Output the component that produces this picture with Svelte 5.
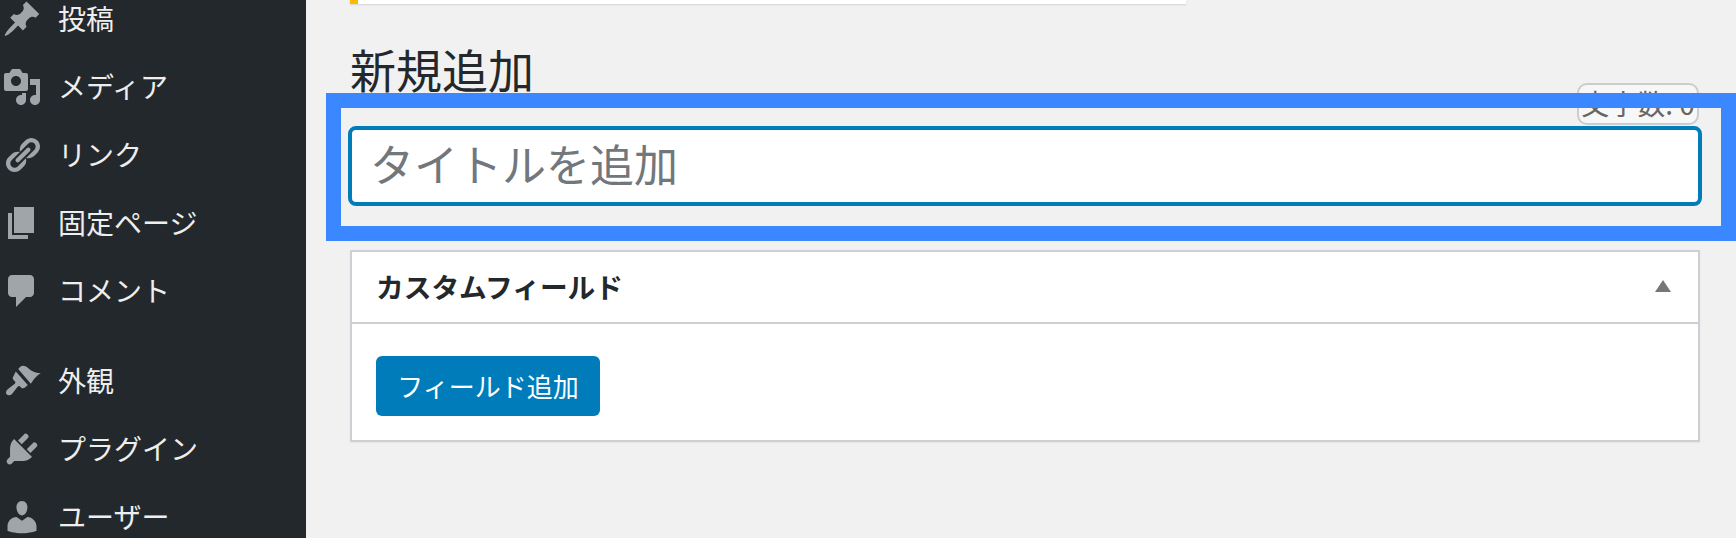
<script>
  const menu = [
    { label: '投稿', icon: 'M10.44 3.02l1.82-1.82 6.36 6.35-1.83 1.82c-1.05-.68-2.48-.57-3.41.36l-.75.75c-.92.93-1.04 2.35-.35 3.41l-1.83 1.82-2.41-2.41-2.8 2.79c-.42.42-3.38 2.71-3.8 2.29s1.86-3.39 2.28-3.81l2.79-2.79L4.1 9.36l1.83-1.82c1.05.69 2.48.57 3.4-.36l.75-.75c.93-.92 1.05-2.35.36-3.41z' },
    { label: 'メディア', icon: 'M13 11V4c0-.55-.45-1-1-1h-1.67L9 1H5L3.67 3H2c-.55 0-1 .45-1 1v7c0 .55.45 1 1 1h10c.55 0 1-.45 1-1zM7 4.5c1.38 0 2.5 1.12 2.5 2.5S8.38 9.5 7 9.5 4.5 8.38 4.5 7 5.62 4.5 7 4.5zM14 6h5v10.5c0 1.38-1.12 2.5-2.5 2.5S14 17.88 14 16.5s1.12-2.5 2.5-2.5c.17 0 .34.02.5.05V9h-3V6zm-4 8.05V13h2v3.5c0 1.38-1.12 2.5-2.5 2.5S7 17.88 7 16.5 8.12 14 9.5 14c.17 0 .34.02.5.05z' },
    { label: 'リンク', icon: 'M17.74 2.76c1.68 1.69 1.68 4.41 0 6.1l-1.53 1.52c-1.12 1.12-2.7 1.47-4.14 1.09l2.62-2.61.76-.77.76-.76c.84-.84.84-2.2 0-3.04-.84-.85-2.2-.85-3.04 0l-.77.76-3.38 3.38c-.37-1.44-.02-3.02 1.1-4.14l1.52-1.53c1.69-1.68 4.42-1.68 6.1 0zM8.59 13.43l5.34-5.34c.42-.42.42-1.1 0-1.52-.44-.43-1.13-.39-1.53 0l-5.33 5.34c-.42.42-.42 1.1 0 1.52.44.43 1.13.39 1.52 0zm-.76 2.29l4.14-4.15c.38 1.44.03 3.02-1.09 4.14l-1.52 1.53c-1.69 1.68-4.41 1.68-6.1 0-1.68-1.68-1.68-4.42 0-6.1l1.53-1.52c1.12-1.12 2.7-1.47 4.14-1.1l-4.14 4.15c-.85.84-.85 2.2 0 3.05.84.84 2.2.84 3.04 0z' },
    { label: '固定ページ', icon: 'M6 15V2h10v13H6zm-1 1h8v2H3V5h2v11z' },
    { label: 'コメント', icon: 'M5 2h9c1.1 0 2 .9 2 2v7c0 1.1-.9 2-2 2h-2l-5 5v-5H5c-1.1 0-2-.9-2-2V4c0-1.1.9-2 2-2z' },
    { label: '外観', sep: true, icon: 'M8.1 4 L9.3 2.7 C10.3 2.1 11.9 2.5 12.9 3.4 C13.9 4.3 15.5 6 19.4 6.1 C16.9 7.5 15.9 9.2 14.4 11.4 Z M6.9 5.3 L12.9 12 L11.5 13.3 C10.9 13.8 10 13.7 9.5 13.2 L9 12.7 C8.6 12.4 8.2 12.5 7.9 12.8 L5 16.5 C4.2 17.3 3 17.4 2.4 16.8 C1.8 16.2 1.9 15.1 2.7 14.3 L6.4 11.4 C6.8 11 6.8 10.6 6.5 10.3 L5.8 9.5 C5.3 9 5.2 8.1 5.7 7.6 Z' },
    { label: 'プラグイン', icon: 'M13.11 4.36L9.87 7.6 8 5.73l3.24-3.24c.35-.34 1.05-.2 1.56.32.52.51.66 1.21.31 1.55zm-8 1.77l.91-1.12 9.01 9.01-1.19.84c-.71.71-2.63 1.16-3.82 1.16H6.14L4.9 17.26c-.59.59-1.54.59-2.12 0-.59-.58-.59-1.53 0-2.12l1.24-1.24v-3.88c0-1.13.4-3.19 1.09-3.89zm7.26 3.97l3.24-3.24c.34-.35 1.04-.21 1.55.31.52.51.66 1.21.31 1.55l-3.24 3.25z' },
    { label: 'ユーザー', icon: 'M10 9.25c-2.27 0-2.73-3.44-2.73-3.44C7 4.02 7.82 2 9.97 2c2.16 0 2.98 2.02 2.71 3.81 0 0-.41 3.44-2.68 3.44zm0 2.57L12.72 10c2.39 0 4.52 2.33 4.52 4.53v2.49s-3.65 1.13-7.24 1.13c-3.65 0-7.24-1.13-7.24-1.13v-2.49c0-2.25 1.94-4.48 4.47-4.48z' }
  ];
</script>

<div class="page">
  <nav class="sidebar">
    {#each menu as item}
      <a href="#top" class="menu-item" class:sep={item.sep}>
        <svg class="menu-icon" viewBox="0 0 20 20" aria-hidden="true"><path d={item.icon} /></svg>
        <span>{item.label}</span>
      </a>
    {/each}
  </nav>

  <main class="content">
    <div class="notice"></div>
    <h1>新規追加</h1>

    <div class="title-wrap">
      <span class="counter">文字数: 0</span>
      <input class="title-input" type="text" placeholder="タイトルを追加" />
    </div>

    <section class="postbox">
      <header class="postbox-head">
        <h2>カスタムフィールド</h2>
        <span class="toggle"></span>
      </header>
      <div class="postbox-body">
        <button class="add-btn" type="button">フィールド追加</button>
      </div>
    </section>
  </main>

  <div class="highlight"></div>
</div>

<style>
  :global(body) {
    margin: 0;
  }

  .page {
    position: relative;
    display: flex;
    width: 1736px;
    height: 538px;
    overflow: hidden;
    background: #f1f1f1;
    color: #23282d;
    font-family: "Noto Sans CJK JP", "Noto Sans", sans-serif;
  }

  /* ── Admin menu ────────────────────────────────────────── */
  .sidebar {
    flex: 0 0 306px;
    background: #23282d;
    display: flex;
    flex-direction: column;
  }

  .menu-item {
    flex: 0 0 68px;
    display: flex;
    align-items: center;
    gap: 16px;
    padding-left: 2px;
    color: #eee;
    font-size: 28px;
    text-decoration: none;
  }

  .menu-item span {
    padding-bottom: 3px;
  }

  .menu-item:first-child {
    margin-top: -15px;
  }

  .menu-item.sep {
    margin-top: 22px;
  }

  .menu-icon {
    width: 40px;
    height: 40px;
    flex-shrink: 0;
    fill: #a0a5aa;
  }

  /* ── Editor ────────────────────────────────────────────── */
  .content {
    flex: 1;
    min-width: 0;
    padding: 0 36px 0 44px;
  }

  .notice {
    width: 828px;
    height: 4px;
    background: #fff;
    border-left: 8px solid #ffb900;
    box-shadow: 0 1px 2px rgba(0, 0, 0, 0.12);
  }

  h1 {
    margin: 29px 0 0;
    font-size: 46px;
    font-weight: 400;
    line-height: 70px;
  }

  .title-wrap {
    position: relative;
    margin: 23px -2px 0 -2px;
  }

  .counter {
    position: absolute;
    right: 3px;
    top: -43px;
    box-sizing: border-box;
    height: 42px;
    width: 122px;
    border: 2px solid #ccc;
    border-radius: 10px;
    background: #f7f7f7;
    color: #666;
    font-size: 28px;
    line-height: 36px;
    text-align: center;
    white-space: nowrap;
  }

  .title-input {
    display: block;
    box-sizing: border-box;
    width: 100%;
    height: 80px;
    margin: 0;
    padding: 0 18px 6px;
    border: 4px solid #007cba;
    border-radius: 8px;
    outline: none;
    background: #fff;
    font-family: inherit;
    font-size: 44px;
  }

  .title-input::placeholder {
    color: #72777c;
    opacity: 1;
  }

  .postbox {
    box-sizing: border-box;
    height: 192px;
    margin-top: 44px;
    border: 2px solid #ccd0d4;
    background: #fff;
    box-shadow: 0 1px 2px rgba(0, 0, 0, 0.05);
  }

  .postbox-head {
    box-sizing: border-box;
    height: 72px;
    display: flex;
    align-items: center;
    justify-content: space-between;
    padding: 0 27px 2px 24px;
    border-bottom: 2px solid #ccd0d4;
  }

  h2 {
    margin: 0;
    font-size: 27.7px;
    font-weight: 700;
  }

  .toggle {
    width: 0;
    height: 0;
    border-left: 8px solid transparent;
    border-right: 8px solid transparent;
    border-bottom: 12px solid #72777c;
  }

  .postbox-body {
    padding: 32px 24px;
  }

  .add-btn {
    display: block;
    box-sizing: border-box;
    width: 224px;
    height: 60px;
    padding: 0 0 2px;
    border: none;
    border-radius: 6px;
    background: #007cba;
    color: #fff;
    font-family: inherit;
    font-size: 26px;
  }

  /* annotation box drawn over the screenshot */
  .highlight {
    position: absolute;
    left: 326px;
    top: 93px;
    box-sizing: border-box;
    width: 1410px;
    height: 148px;
    border: 15px solid #3b87ff;
    pointer-events: none;
  }
</style>
